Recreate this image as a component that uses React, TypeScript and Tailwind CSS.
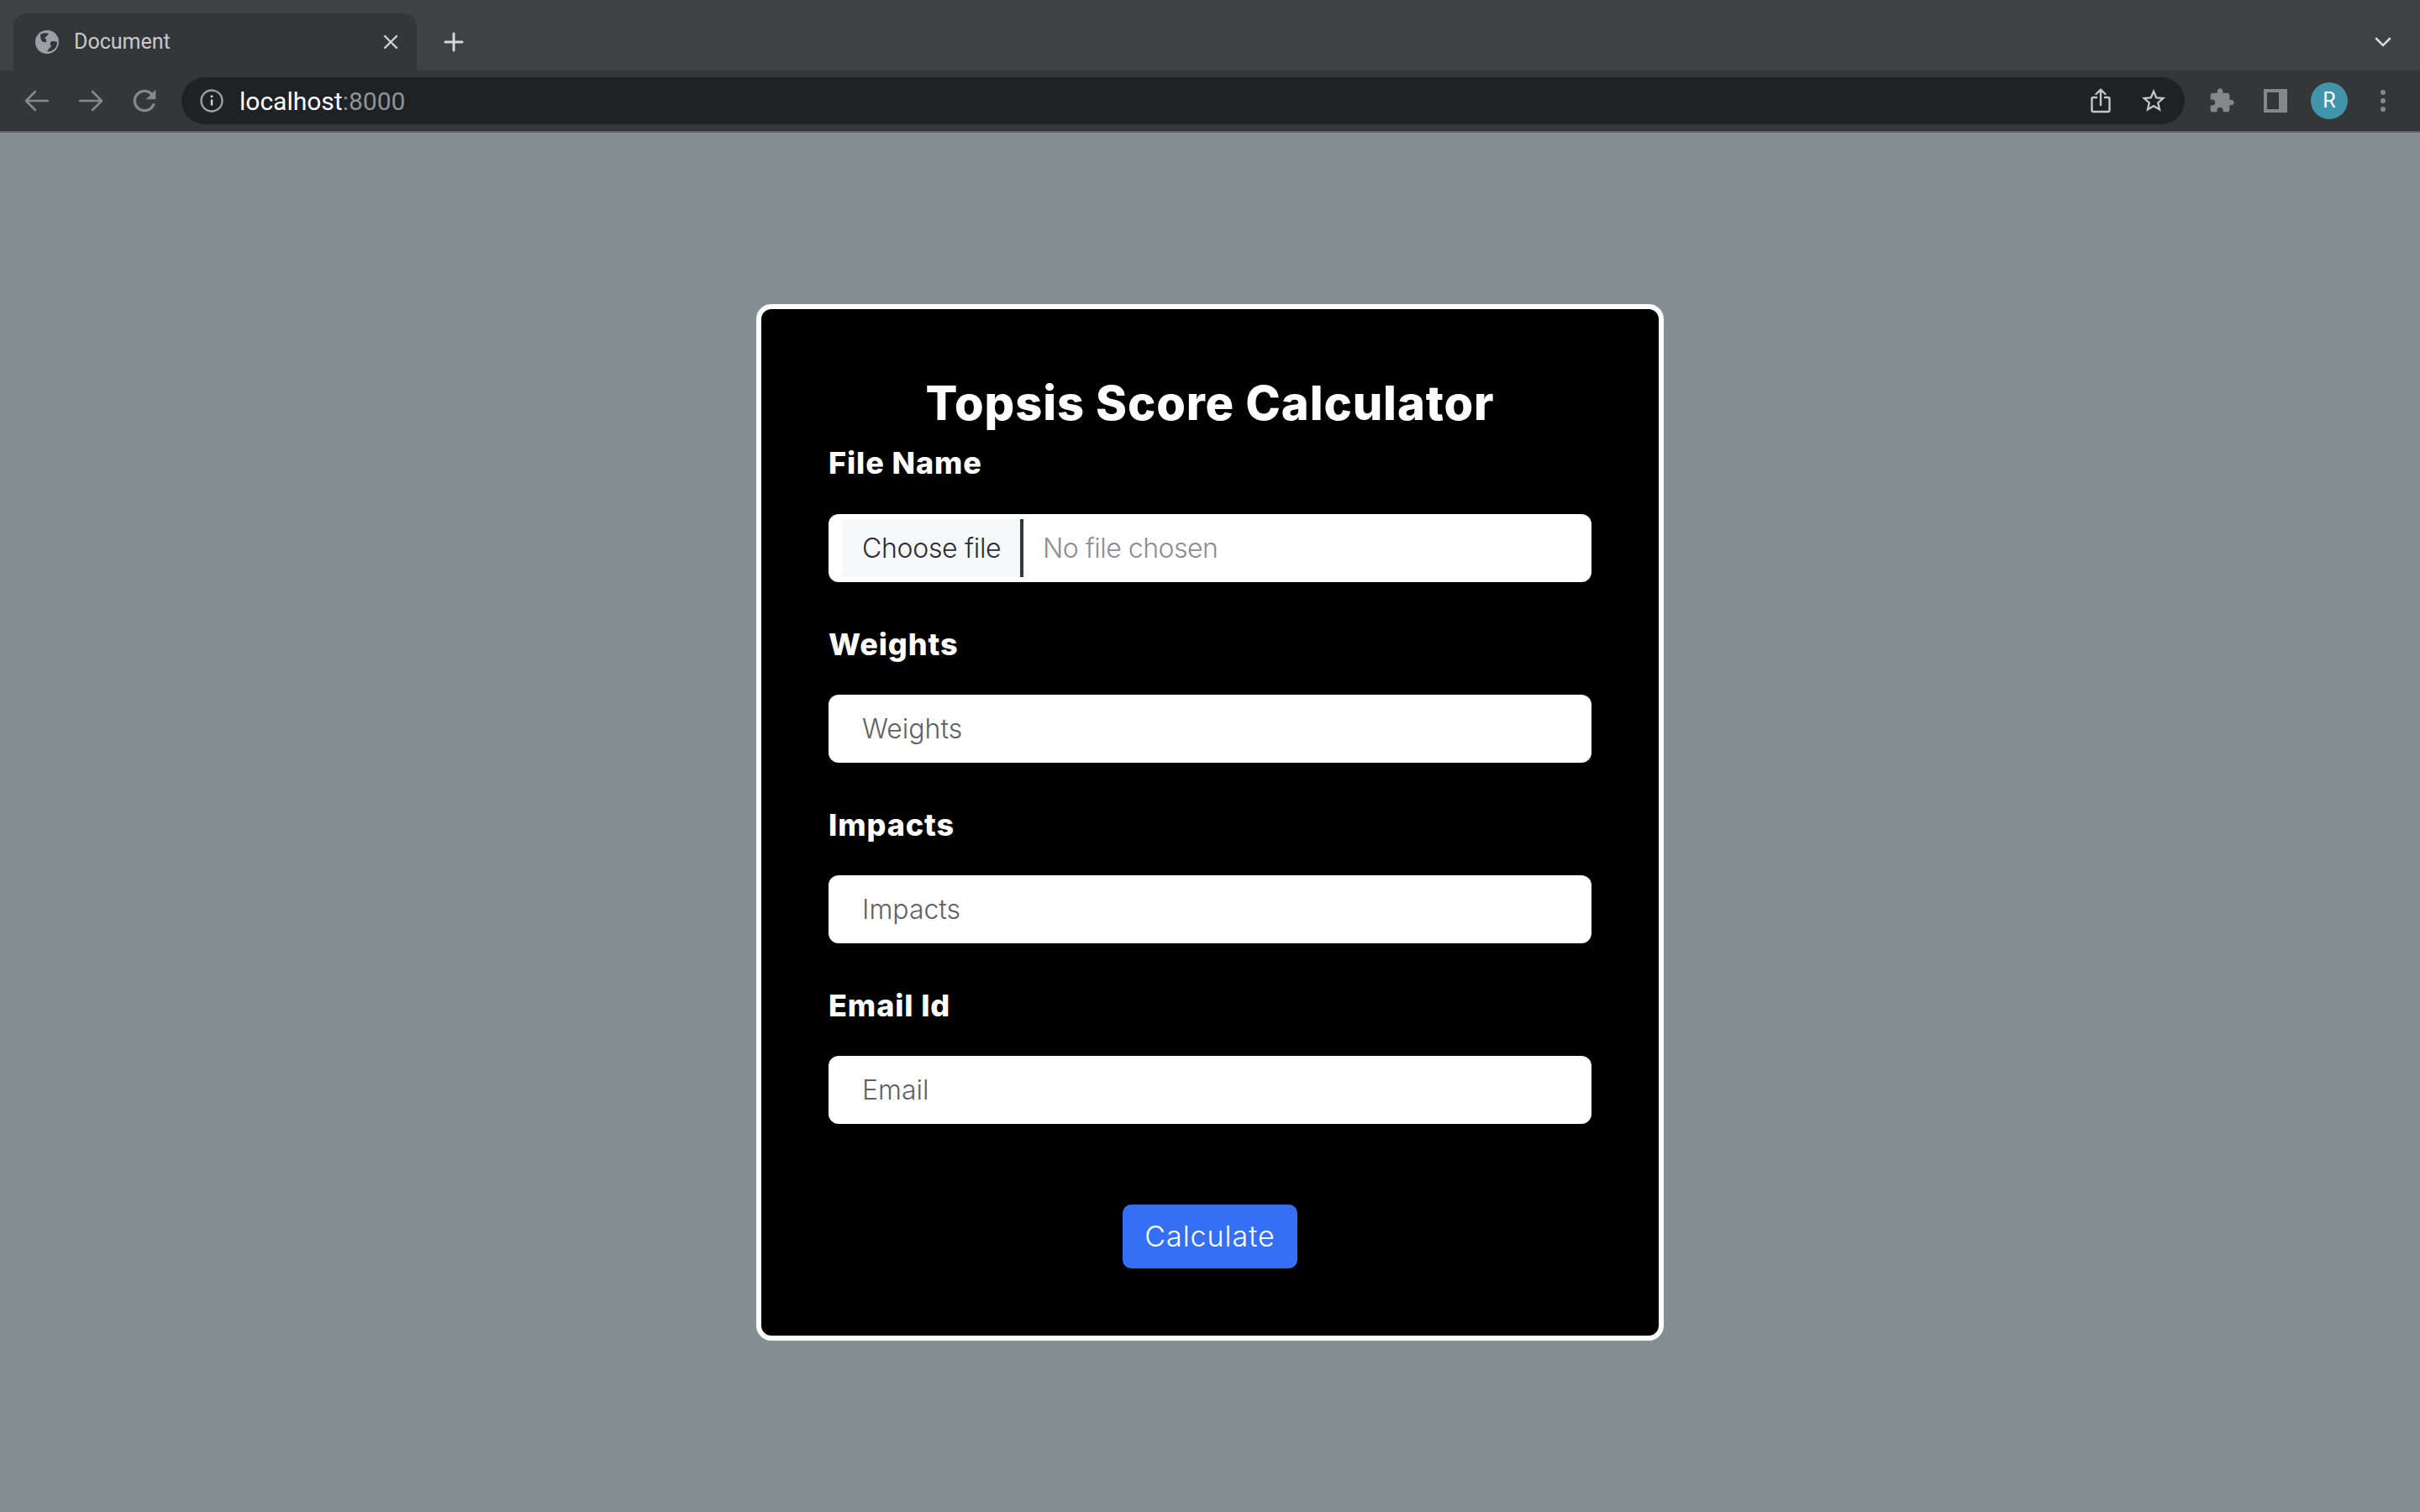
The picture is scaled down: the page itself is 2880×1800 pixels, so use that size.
const sans = "font-['Inter',sans-serif]";

const Field = ({ label, placeholder }: { label: string; placeholder: string }) => {
  return (
    <div className="flex flex-col h-[215px]">
      <label className="h-[70px] pt-[5px] text-[36px] leading-[54px] font-extrabold tracking-[0.9px] text-white">
        {label}
      </label>
      <div className="mt-[22px] h-[81px] rounded-[12px] bg-white flex items-center pl-[40px] text-[32px] font-light text-[#5f6063]">
        {placeholder}
      </div>
    </div>
  );
};

const ChromeBars = () => {
  return (
    <div className="shrink-0 font-['Roboto',sans-serif]">
      <div className="h-[84px] bg-[#3e4245] flex items-end pl-[16px] pr-[34px]">
        <div className="w-[480px] h-[68px] rounded-t-[16px] bg-[#35363a] flex items-center pl-[26px] pr-[22px]">
          <svg viewBox="0 0 28 28" className="w-[28px] h-[28px] shrink-0">
            <circle cx="14" cy="14" r="14" fill="#9aa0a6" />
            <path d="M6 5Q11 2 16 4Q14 8 11 9Q14 11 13 14Q9 15 7 12Q6 9 6 5zM26 14Q21 12 18 14Q17 17 19 19Q17 21 14 25Q20 26 24 21Q26 18 26 14z" fill="#35363a" />
          </svg>
          <span className="ml-[18px] text-[25px] text-[#c8cacc]">Document</span>
          <svg viewBox="0 0 18 18" className="ml-auto w-[18px] h-[18px]" stroke="#d0d2d4" strokeWidth="2.4" strokeLinecap="round">
            <path d="M2 2l14 14M16 2L2 16" />
          </svg>
        </div>
        <div className="h-[68px] flex items-center ml-[32px]">
          <svg viewBox="0 0 24 24" className="w-[24px] h-[24px]" stroke="#d4d6d8" strokeWidth="3" strokeLinecap="round">
            <path d="M12 2v20M2 12h20" />
          </svg>
        </div>
        <div className="h-[68px] flex items-center ml-auto">
          <svg viewBox="0 0 20 14" className="w-[20px] h-[14px]" fill="none" stroke="#d4d6d8" strokeWidth="2.6" strokeLinecap="round">
            <path d="M2 3l8 8 8-8" />
          </svg>
        </div>
      </div>
      <div className="h-[74px] bg-[#35363a] border-b-[2px] border-[#62666a] flex items-center pl-[28px] pr-[41px]">
        <svg viewBox="0 0 32 32" className="w-[32px] h-[32px]" fill="none" stroke="#84878b" strokeWidth="2.6" strokeLinecap="round" strokeLinejoin="round">
          <path d="M29 16H4M14 5L3 16l11 11" />
        </svg>
        <svg viewBox="0 0 32 32" className="ml-[32px] w-[32px] h-[32px]" fill="none" stroke="#84878b" strokeWidth="2.6" strokeLinecap="round" strokeLinejoin="round">
          <path d="M3 16h25M18 5l11 11-11 11" />
        </svg>
        <svg viewBox="0 0 24 24" className="ml-[28px] w-[40px] h-[40px]" fill="#84878b">
          <path d="M17.65 6.35A7.958 7.958 0 0 0 12 4c-4.42 0-7.99 3.58-7.99 8s3.57 8 7.99 8c3.73 0 6.84-2.55 7.73-6h-2.08A5.99 5.99 0 0 1 12 18c-3.31 0-6-2.69-6-6s2.69-6 6-6c1.66 0 3.14.69 4.22 1.78L13 11h7V4l-2.35 2.35z" />
        </svg>
        <div className="ml-[24px] flex-1 h-[56px] rounded-[28px] bg-[#202124] flex items-center pl-[22px] pr-[20px]">
          <svg viewBox="0 0 28 28" className="w-[28px] h-[28px]" fill="none">
            <circle cx="14" cy="14" r="12.5" stroke="#9aa0a6" strokeWidth="2.4" />
            <path d="M14 12.5v7" stroke="#d0d2d4" strokeWidth="2.4" />
            <circle cx="14" cy="8.8" r="1.5" fill="#d0d2d4" />
          </svg>
          <span className="ml-[19px] text-[30px] text-white">
            localhost<span className="text-[#8f9296]">:8000</span>
          </span>
          <svg viewBox="0 0 24 30" className="ml-auto w-[24px] h-[30px]" fill="none" stroke="#c4c6c8" strokeWidth="2.4" strokeLinecap="round" strokeLinejoin="round">
            <path d="M7 11H3a1.5 1.5 0 0 0-1.5 1.5v14A1.5 1.5 0 0 0 3 28h18a1.5 1.5 0 0 0 1.5-1.5v-14A1.5 1.5 0 0 0 21 11h-4M12 20V2M6.5 7L12 1.6 17.5 7" />
          </svg>
          <svg viewBox="0 0 24 24" className="ml-[34px] w-[34px] h-[34px]" fill="#c4c6c8">
            <path d="M22 9.24l-7.19-.62L12 2 9.19 8.63 2 9.24l5.46 4.73L5.82 21 12 17.27 18.18 21l-1.63-7.03L22 9.24zM12 15.4l-3.76 2.27 1-4.28-3.32-2.88 4.38-.38L12 6.1l1.71 4.04 4.38.38-3.32 2.88 1 4.28L12 15.4z" />
          </svg>
        </div>
        <svg viewBox="0 0 24 24" className="ml-[28px] w-[32px] h-[32px]" fill="#85878a">
          <path d="M20.5 11H19V7c0-1.1-.9-2-2-2h-4V3.5C13 2.12 11.88 1 10.5 1S8 2.12 8 3.5V5H4c-1.1 0-1.99.9-1.99 2v3.8H3.5c1.49 0 2.7 1.21 2.7 2.7s-1.21 2.7-2.7 2.7H2V20c0 1.1.9 2 2 2h3.8v-1.5c0-1.49 1.21-2.7 2.7-2.7 1.49 0 2.7 1.21 2.7 2.7V22H17c1.1 0 2-.9 2-2v-4h1.5c1.38 0 2.5-1.12 2.5-2.5S21.88 11 20.5 11z" />
        </svg>
        <div className="ml-[34px] w-[28px] h-[28px] bg-[#85878a] pl-[4px] py-[4px] pr-[10px]">
          <div className="w-full h-full bg-[#35363a]" />
        </div>
        <div className="ml-[28px] w-[44px] h-[44px] rounded-full bg-[#4095a8] flex items-center justify-center text-[25px] text-white">
          R
        </div>
        <div className="ml-[39px] flex flex-col gap-[4px]">
          <div className="w-[6px] h-[6px] rounded-full bg-[#85878a]" />
          <div className="w-[6px] h-[6px] rounded-full bg-[#85878a]" />
          <div className="w-[6px] h-[6px] rounded-full bg-[#85878a]" />
        </div>
      </div>
    </div>
  );
};

const App = () => {
  return (
    <div className="w-[2880px] h-[1800px] flex flex-col bg-[#848f94] overflow-hidden">
      <ChromeBars />
      <div className={`flex-1 flex justify-center pt-[204px] ${sans}`}>
        <div className="w-[1080px] h-[1234px] rounded-[18px] border-[6px] border-white bg-black px-[80px] pt-[68px]">
          <h1 className="h-[84px] pt-[2px] text-center text-[56px] leading-[84px] font-extrabold tracking-[0.9px] text-white">
            Topsis Score Calculator
          </h1>
          <div className="flex flex-col h-[215px]">
            <label className="h-[70px] pt-[4px] text-[36px] leading-[54px] font-extrabold tracking-[0.9px] text-white">
              File Name
            </label>
            <div className="mt-[22px] h-[81px] rounded-[12px] bg-white flex items-center pl-[16px] text-[32px] font-light tracking-[-0.3px]">
              <div className="h-[69px] w-[216px] bg-[#f7f8fa] border-r-[4px] border-[#35383d] flex items-center pl-[24px] text-[#2b2e33]">
                Choose file
              </div>
              <span className="ml-[23px] tracking-[-0.5px] text-[#8d8d8f]">No file chosen</span>
            </div>
          </div>
          <Field label="Weights" placeholder="Weights" />
          <Field label="Impacts" placeholder="Impacts" />
          <Field label="Email Id" placeholder="Email" />
          <div className="flex justify-center mt-[54px]">
            <button className="w-[208px] h-[76px] pb-[2px] rounded-[10px] bg-[#3370f5] text-[34px] font-light tracking-[1px] text-white">
              Calculate
            </button>
          </div>
        </div>
      </div>
    </div>
  );
};

export default App;
